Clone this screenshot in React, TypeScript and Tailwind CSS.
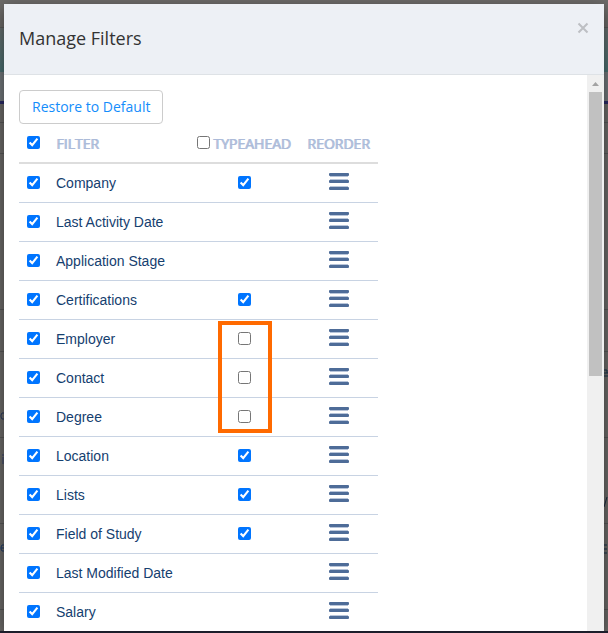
import React from "react";

const filters = [
  { name: "Company", typeahead: true },
  { name: "Last Activity Date" },
  { name: "Application Stage" },
  { name: "Certifications", typeahead: true },
  { name: "Employer", typeahead: false },
  { name: "Contact", typeahead: false },
  { name: "Degree", typeahead: false },
  { name: "Location", typeahead: true },
  { name: "Lists", typeahead: true },
  { name: "Field of Study", typeahead: true },
  { name: "Last Modified Date" },
  { name: "Salary" },
];

function ReorderIcon() {
  return (
    <svg className="block mx-auto" width="20" height="17" viewBox="0 0 20 17" aria-hidden="true">
      <g fill="#b8c5da">
        <rect x="1" y="3" width="18" height="1" />
        <rect x="1" y="6" width="18" height="1" />
        <rect x="1" y="13" width="18" height="1" />
      </g>
      <g fill="#4e6c98">
        <rect y="0" width="20" height="3" rx="1" />
        <rect y="7" width="20" height="3" rx="1" />
        <rect y="14" width="20" height="3" rx="1" />
      </g>
    </svg>
  );
}

// The dimmed page that shows at both edges of the dialog
function PageBehind() {
  return (
    <div className="absolute inset-0 flex flex-col bg-[#6e6c6a]" aria-hidden="true">
      <div className="h-7 shrink-0 border-b border-[#5c5c5c]"></div>
      <div className="h-11 shrink-0 bg-linear-to-b from-[#687070] to-[#4a7072]"></div>
      <div className="h-[29px] shrink-0 bg-[#73787c]"></div>
      <div className="h-[3px] shrink-0 bg-[#2b2b66]"></div>
      <div className="h-[19px] shrink-0 border-b border-[#585858]"></div>
      <div className="h-[31px] shrink-0 border-b border-[#585858]"></div>
      <div className="h-[156px] shrink-0 border-b border-[#585858]"></div>
      <div className="h-[42px] shrink-0 border-b border-[#585858]"></div>
      <div className="h-[86px] shrink-0 border-b border-[#585858] flex flex-col justify-around">
        <svg className="self-end" width="4" height="8" viewBox="0 0 4 8">
          <path d="M0 1h3v3M0 4h4M0 7h4" fill="none" stroke="#17304a" />
        </svg>
        <svg width="4" height="8" viewBox="0 0 4 8">
          <path d="M4 1H2L1 3v2l1 2h2" fill="none" stroke="#26375c" />
        </svg>
      </div>
      <div className="h-[86px] shrink-0 border-b border-[#585858] flex flex-col justify-around">
        <svg width="4" height="10" viewBox="0 0 4 10">
          <path d="M3 0v2M3 3v7" stroke="#34416c" />
        </svg>
        <svg className="self-end" width="4" height="10" viewBox="0 0 4 10">
          <path d="M0 10L3 0" stroke="#1b2b40" />
        </svg>
      </div>
      <div className="h-[86px] shrink-0 border-b border-[#585858] pt-5 flex justify-between items-start">
        <svg width="4" height="8" viewBox="0 0 4 8">
          <path d="M4 1H2L1 3v2l1 2h2M1 4h3" fill="none" stroke="#1f3b67" />
        </svg>
        <svg width="4" height="10" viewBox="0 0 4 10">
          <path d="M0 1h3M0 5h3M0 9h3" stroke="#17304a" />
        </svg>
      </div>
    </div>
  );
}

export default function App() {
  return (
    <div className="relative h-screen flex flex-col px-1 pt-1 border-b-2 border-[#1c1e2b] overflow-hidden">
      <PageBehind />
      <div
        role="dialog"
        aria-labelledby="dialog-title"
        className="relative flex-1 min-h-0 flex flex-col bg-white shadow-[0_5px_15px_rgba(0,0,0,0.5)] font-['Open_Sans',sans-serif]"
      >
        <header className="flex items-start justify-between bg-[#edf0f5] border-b border-[#dee2e6] px-[15px] pt-[22px] pb-6">
          <h1 id="dialog-title" className="text-lg leading-6 text-[#333]">
            Manage Filters
          </h1>
          <button type="button" aria-label="Close" className="-mt-2 text-[#bdbfc3]">
            <svg className="mt-1" width="12" height="12" viewBox="0 0 12 12" aria-hidden="true">
              <path d="M1.5 1.5l9 9m0-9l-9 9" fill="none" stroke="currentColor" strokeWidth="2" />
            </svg>
          </button>
        </header>

        <div className="flex flex-1 min-h-0">
          <div className="flex-1 min-w-0 overflow-hidden px-[15px] pt-[15px]">
            <button
              type="button"
              className="block h-[34px] px-3 text-sm leading-5 text-[#148dfb] border border-[#ccc] rounded"
            >
              Restore to Default
            </button>

            <table className="border-separate border-spacing-0 text-sm leading-5">
              <thead>
                <tr className="text-left text-[#acbbd9] [&>th]:h-10 [&>th]:px-2 [&>th]:border-b-2 [&>th]:border-[#ddd] [&>th]:font-normal [&>th]:[text-shadow:1px_0_0_#acbbd9]">
                  <th>
                    <input type="checkbox" aria-label="Select all filters" defaultChecked className="block mb-0.5 size-[13px] accent-[#0075ff]" />
                  </th>
                  <th className="w-[141px] pt-0.5">FILTER</th>
                  <th className="w-[110px]">
                    <label className="flex items-center gap-[3px]">
                      <input type="checkbox" className="mb-0.5 size-[13px] shrink-0" />
                      <span className="pt-0.5">TYPEAHEAD</span>
                    </label>
                  </th>
                  <th className="w-[79px] pt-0.5">REORDER</th>
                </tr>
              </thead>
              <tbody className="font-['Liberation_Sans',Arial,sans-serif] text-[#15406f]">
                {filters.map((filter, index) => (
                  <tr key={filter.name} className="[&>td]:h-[39px] [&>td]:px-2 [&>td]:border-b [&>td]:border-[#c8d3e3]">
                    <td>
                      <input id={`filter-${index}`} type="checkbox" defaultChecked className="block mb-0.5 size-[13px]" />
                    </td>
                    <td>
                      <label htmlFor={`filter-${index}`}>{filter.name}</label>
                    </td>
                    <td className="relative">
                      {filter.typeahead !== undefined && (
                        <input
                          type="checkbox"
                          aria-label={`${filter.name} typeahead`}
                          defaultChecked={filter.typeahead}
                          className="block mx-auto mb-0.5 size-[13px]"
                        />
                      )}
                      {/* Highlight around the three unticked rows */}
                      {filter.name === "Employer" && (
                        <span className="absolute z-10 left-[29px] top-px w-[54px] h-28 border-4 border-[#ff6a00] pointer-events-none"></span>
                      )}
                    </td>
                    <td>
                      <button type="button" aria-label={`Reorder ${filter.name}`} className="block mx-auto pb-1">
                        <ReorderIcon />
                      </button>
                    </td>
                  </tr>
                ))}
              </tbody>
            </table>
          </div>

          {/* Scrollbar */}
          <div className="w-[17px] flex flex-col items-center bg-[#f0f0f0]" aria-hidden="true">
            <svg className="shrink-0" width="17" height="17" viewBox="0 0 17 17">
              <path d="M5 11h7l-3.5-4z" fill="#a3a3a3" />
            </svg>
            <div className="w-[13px] h-[51%] bg-[#c1c1c1]"></div>
          </div>
        </div>
      </div>
    </div>
  );
}
